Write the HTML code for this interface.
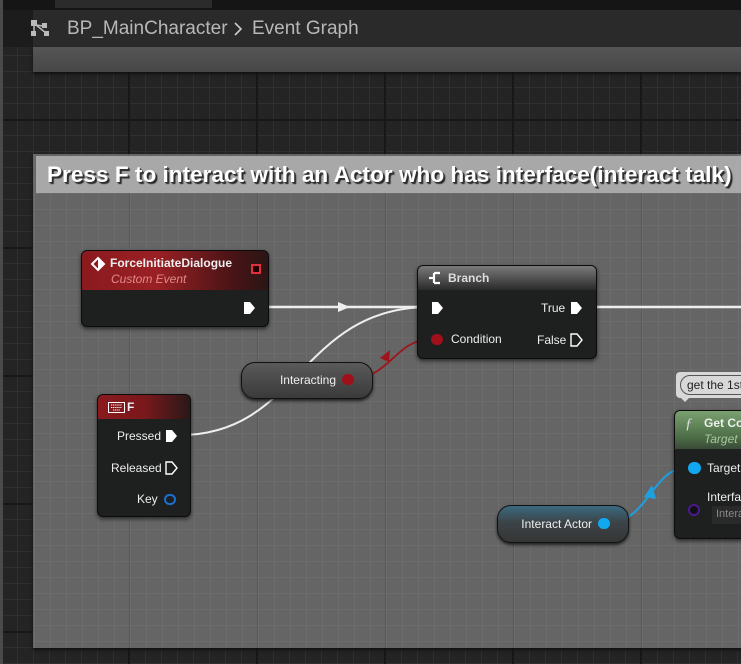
<!DOCTYPE html>
<html><head><style>
*{margin:0;padding:0;box-sizing:border-box}
body{width:741px;height:664px;overflow:hidden;background:#262626;font-family:"Liberation Sans",sans-serif;position:relative}
.grid{position:absolute;inset:0;background:
linear-gradient(90deg,#171717 2px,transparent 2px) 0 0/128px 128px,
linear-gradient(#171717 2px,transparent 2px) 0 119px/128px 128px,
linear-gradient(90deg,#2f2f2f 1px,transparent 1px) 1px 0/16px 16px,
linear-gradient(#2f2f2f 1px,transparent 1px) 0 7px/16px 16px,#242424}
.abs{position:absolute}
.cmt{left:33px;top:154px;width:720px;height:494px;background:
linear-gradient(90deg,#5a5a5a 1px,transparent 1px) 96px 0/128px 128px,
linear-gradient(90deg,#6c6c6c 1px,transparent 1px) 1px 0/16px 16px,
linear-gradient(#6c6c6c 1px,transparent 1px) 0 7px/16px 16px,#656565;box-shadow:0 2px 3px #111}
.chead{position:absolute;left:3px;top:2px;right:0;height:37px;background:#a8a8a8;color:#fff;font-weight:bold;font-size:22.6px;line-height:38px;padding-left:11px;text-shadow:1px 1px 0 #333,2px 2px 1px #222;white-space:nowrap}
.node{position:absolute;background:#1e1f1f;border:1px solid #0c0c0c;border-radius:6px;box-shadow:0 2px 4px rgba(0,0,0,.6);color:#eee;font-size:12px;overflow:hidden}
.hd{color:#eee;font-weight:bold;font-size:12px;padding-left:10px}
.pill{position:absolute;border-radius:14px;background:linear-gradient(#5a5a5a,#3a3a3a);border:1px solid #111;box-shadow:0 2px 3px rgba(0,0,0,.7);color:#eee;font-size:12px;text-align:right;line-height:34px}
.t{position:absolute;color:#eee;font-size:12px;white-space:nowrap}
</style></head><body>
<div class="grid"></div>
<div class="abs" style="left:0;top:0;width:3px;height:664px;background:#4a4a4a"></div>
<div class="abs" style="left:3px;top:0;width:741px;height:10px;background:#151515"></div>
<div class="abs" style="left:55px;top:0;width:157px;height:8px;background:#2b2b2b"></div>
<div class="abs" style="left:3px;top:10px;width:30px;height:37px;background:#1c1c1c"></div>
<div class="abs" style="left:33px;top:10px;width:708px;height:37px;background:#2a2a2a"></div>
<svg class="abs" style="left:28px;top:17px" width="26" height="22" viewBox="0 0 26 22"><rect x="3" y="3" width="6" height="6" fill="#bbb"/><rect x="3" y="14" width="5" height="5" fill="#bbb"/><rect x="14" y="6" width="5" height="5" fill="#bbb"/><rect x="16" y="14" width="5" height="5" fill="#bbb"/><path d="M6 9V16M8 8L15 9M8 8L18 16" stroke="#bbb" stroke-width="1.5" fill="none"/></svg>
<div class="t" style="left:67px;top:18px;font-size:19px;color:#b8b8b8">BP_MainCharacter</div>
<svg class="abs" style="left:232px;top:21px" width="12" height="16"><path d="M3 2L9 8L3 14" stroke="#ccc" stroke-width="1.6" fill="none"/></svg>
<div class="t" style="left:252px;top:18px;font-size:19px;color:#b8b8b8">Event Graph</div>
<div class="abs" style="left:33px;top:47px;width:708px;height:25px;background:linear-gradient(#555,#474747);box-shadow:0 2px 3px #111"></div>
<div class="abs cmt"><div class="chead">Press F to interact with an Actor who has interface(interact talk)</div></div>

<svg class="abs" style="left:0;top:0" width="741" height="664">
<path d="M268 307H420M596 307H741" stroke="#eee" stroke-width="2.5" fill="none"/>
<path d="M338 302L350 307L338 312Z" fill="#eee"/>
<path d="M180 435C300 435 300 307 430 307" stroke="#eee" stroke-width="2" fill="none"/>
<path d="M350 379C390 379 395 339 432 339" stroke="#a0141a" stroke-width="1.8" fill="none"/>
<path d="M380 358L390 350L389 362Z" fill="#a0141a"/>
<path d="M606 523C650 523 650 467 690 467" stroke="#1ea0e0" stroke-width="2" fill="none"/>
<path d="M644 497L652 485L656 499Z" fill="#1ea0e0"/>
</svg>

<div class="node" style="left:81px;top:250px;width:188px;height:77px">
<div style="height:39px;background:linear-gradient(90deg,#8a1a1e 0%,#9a2024 40%,#4a1416 80%,#2a1515 100%)">
<div class="hd" style="padding-left:28px;padding-top:5px">ForceInitiateDialogue</div>
<div style="padding-left:29px;font-style:italic;color:#e08a8a;font-size:12px;margin-top:2px">Custom Event</div></div>
<svg class="abs" style="left:8px;top:5px" width="16" height="16"><path d="M8 2L14 8L8 14L2 8Z" stroke="#fff" stroke-width="2" fill="none"/><path d="M8 2L14 8L8 14Z" fill="#fff"/></svg>
<div class="abs" style="left:169px;top:13px;width:10px;height:10px;border:2px solid #e03040;background:#200"></div>
<svg class="abs" style="left:161px;top:50px" width="14" height="14"><path d="M1 1H7L12 7L7 13H1Z" fill="#fff"/></svg>
</div>

<div class="node" style="left:417px;top:265px;width:180px;height:94px">
<div style="height:24px;background:linear-gradient(#7a7a7a,#4a4a4a 60%,#2a2a2a)"><div class="hd" style="padding-left:30px;line-height:24px;color:#ddd">Branch</div></div>
<svg class="abs" style="left:9px;top:5px" width="16" height="14"><path d="M2 7H7M7 2V12M7 2H13M7 12H13" stroke="#fff" stroke-width="2.2" fill="none"/></svg>
<svg class="abs" style="left:13px;top:35px" width="14" height="14"><path d="M1 1H7L12 7L7 13H1Z" fill="#fff"/></svg>
<div class="t" style="left:123px;top:35px">True</div>
<svg class="abs" style="left:152px;top:35px" width="14" height="14"><path d="M1 1H7L12 7L7 13H1Z" fill="#fff"/></svg>
<div class="abs" style="left:13px;top:68px;width:12px;height:11px;border-radius:6px;background:#a0101a"></div>
<div class="t" style="left:33px;top:66px">Condition</div>
<div class="t" style="left:119px;top:67px">False</div>
<svg class="abs" style="left:152px;top:67px" width="14" height="14"><path d="M1 1H7L12 7L7 13H1Z" stroke="#fff" stroke-width="1.4" fill="none"/></svg>
</div>

<div class="pill" style="left:241px;top:362px;width:132px;height:37px;padding-right:36px">Interacting</div>
<div class="abs" style="left:342px;top:374px;width:12px;height:11px;border-radius:6px;background:#a0101a"></div>

<div class="node" style="left:97px;top:394px;width:94px;height:123px">
<div style="height:24px;background:linear-gradient(90deg,#8a1a1e,#7a181c 50%,#2a1818)"><div class="hd" style="padding-left:29px;line-height:24px">F</div></div>
<svg class="abs" style="left:10px;top:7px" width="17" height="11"><rect x="0.5" y="0.5" width="16" height="10" fill="none" stroke="#fff"/><path d="M3 3H14M3 5.5H14M5 8H12" stroke="#fff" stroke-dasharray="1.3 .8"/></svg>
<div class="t" style="left:19px;top:34px">Pressed</div>
<svg class="abs" style="left:67px;top:34px" width="14" height="14"><path d="M1 1H7L12 7L7 13H1Z" fill="#fff"/></svg>
<div class="t" style="left:13px;top:66px">Released</div>
<svg class="abs" style="left:67px;top:66px" width="14" height="14"><path d="M1 1H7L12 7L7 13H1Z" stroke="#fff" stroke-width="1.4" fill="none"/></svg>
<div class="t" style="left:39px;top:97px">Key</div>
<div class="abs" style="left:66px;top:99px;width:12px;height:11px;border-radius:6px;border:2px solid #1a70d0"></div>
</div>

<div class="pill" style="left:497px;top:505px;width:132px;height:38px;padding-right:36px;background:linear-gradient(#3a6a80,#3c4448 45%,#353535);line-height:36px">Interact Actor</div>
<div class="abs" style="left:598px;top:518px;width:12px;height:11px;border-radius:6px;background:#12a8f0"></div>

<div class="abs" style="left:676px;top:372px;width:80px;height:26px;background:#d8d8d8;border-radius:4px"></div>
<div class="abs" style="left:680px;top:375px;width:80px;height:20px;border:1px solid #555;border-radius:10px;font-size:12px;line-height:18px;padding-left:6px;color:#222;white-space:nowrap">get the 1st</div>
<div class="abs" style="left:681px;top:398px;border:4px solid transparent;border-top-color:#d8d8d8"></div>

<div class="node" style="left:674px;top:410px;width:90px;height:129px">
<div style="height:38px;background:linear-gradient(#7aa070,#4c6c46 70%,#3a4a38)">
<div class="hd" style="padding-left:29px;padding-top:5px;color:#e8f0e8">Get Co</div>
<div style="padding-left:29px;font-style:italic;color:#a8c8a0;font-size:12px;margin-top:2px">Target</div></div>
<div class="t" style="left:10px;top:5px;font-style:italic;font-family:'Liberation Serif',serif;font-size:15px;color:#ddd">ƒ</div>
<div class="abs" style="left:13px;top:51px;width:13px;height:12px;border-radius:6px;background:#12a8f0"></div>
<div class="t" style="left:32px;top:50px">Target</div>
<div class="t" style="left:32px;top:79px">Interfa</div>
<div class="abs" style="left:37px;top:95px;width:60px;height:18px;background:#2a2a2a;color:#888;font-size:11px;padding:2px 4px">Intera</div>
<div class="abs" style="left:13px;top:93px;width:12px;height:12px;border-radius:6px;border:2px solid #4a1a90;background:#111"></div>
</div>
</body></html>
